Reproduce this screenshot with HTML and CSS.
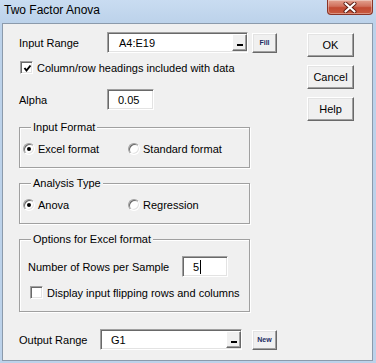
FILE: index.html
```html
<!DOCTYPE html>
<html>
<head>
<meta charset="utf-8">
<link rel="stylesheet" href="styles.css">
</head>
<body>
<div class="window">
  <div class="titlebar">
    <span class="title">Two Factor Anova</span>
    <div class="close">
      <svg width="14" height="11" viewBox="0 0 14 11">
        <path d="M2.5 1.5 L11.5 9.5 M11.5 1.5 L2.5 9.5" stroke="#5a1a10" stroke-width="4" stroke-linecap="round"/>
        <path d="M2.5 1.5 L11.5 9.5 M11.5 1.5 L2.5 9.5" stroke="#ffffff" stroke-width="2.2" stroke-linecap="round"/>
      </svg>
    </div>
  </div>
  <div class="client">
    <div class="main">
      <div class="row r-range">
        <span class="lbl w88">Input Range</span>
        <div class="tbox range"><span class="val">A4:E19</span><span class="pick"><i></i></span></div>
        <div class="btn mini">Fill</div>
      </div>
      <div class="check r-head"><span class="cb"><svg width="9" height="9" viewBox="0 0 9 9"><path d="M1.5 4 L3.5 6.5 L7.5 1.5" fill="none" stroke="#000" stroke-width="2"/></svg></span>Column/row headings included with data</div>
      <div class="row r-alpha">
        <span class="lbl w88">Alpha</span>
        <div class="tbox alpha"><span class="val">0.05</span></div>
      </div>
      <div class="group g1">
        <div class="legend">Input Format</div>
        <div class="opts">
          <span class="opt"><span class="radio on"><i></i></span>Excel format</span>
          <span class="opt"><span class="radio"></span>Standard format</span>
        </div>
      </div>
      <div class="group g2">
        <div class="legend">Analysis Type</div>
        <div class="opts">
          <span class="opt"><span class="radio on"><i></i></span>Anova</span>
          <span class="opt"><span class="radio"></span>Regression</span>
        </div>
      </div>
      <div class="group g3">
        <div class="legend">Options for Excel format</div>
        <div class="row r-rows">
          <span class="lbl w154">Number of Rows per Sample</span>
          <div class="tbox num"><span class="val">5<span class="caret"></span></span></div>
        </div>
        <div class="check r-flip"><span class="cb"></span>Display input flipping rows and columns</div>
      </div>
      <div class="row r-out">
        <span class="lbl w81">Output Range</span>
        <div class="tbox out"><span class="val">G1</span><span class="pick"><i></i></span></div>
        <div class="btn mini">New</div>
      </div>
    </div>
    <div class="side">
      <div class="btn big">OK</div>
      <div class="btn big">Cancel</div>
      <div class="btn big">Help</div>
    </div>
  </div>
</div>
</body>
</html>
```
FILE: styles.css
```css
html, body {
  margin: 0;
  padding: 0;
}
body {
  font: 11px "Liberation Sans", Arial, sans-serif;
  color: #000;
}
.window {
  width: 376px;
  height: 363px;
  background: linear-gradient(#c9dcf1, #bcd2ea 23px, #bcd2ea);
  display: flex;
  flex-direction: column;
  overflow: hidden;
}
.titlebar {
  height: 23px;
  flex: none;
  display: flex;
  justify-content: space-between;
  align-items: flex-start;
  padding: 0 3px 0 4px;
}
.title {
  font-size: 12px;
  line-height: 15px;
  padding-top: 3px;
  color: #000;
}
.close {
  width: 46px;
  height: 15px;
  box-sizing: border-box;
  border: 1px solid #8a3426;
  border-top: none;
  border-radius: 0 0 4px 4px;
  background: linear-gradient(#e3a291, #d0705c 45%, #c24a33 55%, #c85a3f);
  box-shadow: inset 0 0 0 1px rgba(255,255,255,0.35);
  display: flex;
  align-items: center;
  justify-content: center;
}
.client {
  flex: 1;
  margin: 0 3px 2px 2px;
  border: 1px solid #8b9aab;
  background: #f0f0f0;
  display: flex;
}
.main {
  width: 304px;
  flex: none;
  padding-left: 16px;
  box-sizing: border-box;
  display: flex;
  flex-direction: column;
  align-items: flex-start;
}
.row {
  display: flex;
  align-items: center;
  height: 21px;
}
.lbl { white-space: nowrap; }
.w88 { width: 88px; }
.w81 { width: 81px; }
.w154 { width: 154px; }
.r-range { margin-top: 8px; }
.r-head { margin-top: 8px; }
.r-alpha { margin-top: 15px; }
.g1 { margin-top: 17px; height: 41px; }
.g2 { margin-top: 15px; height: 41px; }
.g3 { margin-top: 15px; height: 73px; }
.r-out { margin-top: 17px; }

.tbox {
  height: 21px;
  box-sizing: border-box;
  background: #fff;
  border: 1px solid;
  border-color: #a0a0a0 #fff #fff #a0a0a0;
  box-shadow: inset 1px 1px 0 #696969, inset -1px -1px 0 #e3e3e3;
  display: flex;
  align-items: stretch;
}
.tbox .val {
  flex: 1;
  display: flex;
  align-items: center;
  padding-left: 10px;
}
.range { width: 141px; }
.out { width: 142px; }
.alpha { width: 47px; }
.num { width: 46px; }
.range .val { padding-left: 11px; }
.alpha .val { padding-left: 10px; }
.num .val { padding-left: 10px; }
.caret {
  display: inline-block;
  width: 1px;
  height: 14px;
  background: #000;
  margin-left: 1px;
}
.pick {
  width: 15px;
  margin: 1px 0 1px 0;
  box-sizing: border-box;
  background: #f0f0f0;
  border: 1px solid;
  border-color: #fff #696969 #696969 #fff;
  box-shadow: inset -1px -1px 0 #a0a0a0;
  display: flex;
  align-items: flex-end;
  justify-content: center;
  padding-bottom: 4px;
}
.pick i {
  display: block;
  width: 6px;
  height: 2px;
  background: #000;
}
.btn {
  box-sizing: border-box;
  background: #f0f0f0;
  border: 1px solid;
  border-color: #fff #696969 #696969 #fff;
  box-shadow: inset -1px -1px 0 #a0a0a0, inset 1px 1px 0 #e3e3e3;
  display: flex;
  align-items: center;
  justify-content: center;
}
.mini {
  width: 25px;
  height: 20px;
  font-size: 7px;
  font-weight: bold;
  color: #1c2c62;
}
.r-range .mini { margin-left: 4px; }
.r-out .mini { margin-left: 10px; }
.check {
  display: flex;
  align-items: center;
  height: 13px;
  white-space: nowrap;
}
.r-head { margin-left: 1px; }
.cb {
  width: 13px;
  height: 13px;
  box-sizing: border-box;
  background: #fff;
  border: 1px solid;
  border-color: #a0a0a0 #fff #fff #a0a0a0;
  box-shadow: inset 1px 1px 0 #696969, inset -1px -1px 0 #e3e3e3;
  margin-right: 4px;
  display: flex;
  align-items: center;
  justify-content: center;
  flex: none;
}
.cb svg { display: block; margin: 1px 0 0 1px; }
.group {
  width: 231px;
  box-sizing: border-box;
  border: 1px solid #a0a0a0;
  box-shadow: inset 1px 1px 0 #fff, 1px 1px 0 #fff;
  display: flex;
  flex-direction: column;
  align-items: flex-start;
}
.legend {
  margin: -7px 0 0 11px;
  padding: 0 2px;
  line-height: 13px;
  background: #f0f0f0;
  white-space: nowrap;
}
.opts {
  display: flex;
  height: 14px;
  margin-top: 8px;
  padding-left: 3px;
}
.opt {
  display: flex;
  align-items: center;
  width: 105px;
  white-space: nowrap;
}
.radio {
  width: 12px;
  height: 12px;
  box-sizing: border-box;
  border-radius: 50%;
  border: 1px solid;
  border-color: #a0a0a0 #fff #fff #a0a0a0;
  background: #fff;
  box-shadow: inset 1px 1px 0 #696969, inset -1px -1px 0 #e3e3e3;
  margin-right: 3px;
  display: flex;
  align-items: center;
  justify-content: center;
  flex: none;
}
.radio i {
  display: block;
  width: 4px;
  height: 4px;
  border-radius: 50%;
  background: #000;
}
.r-rows { margin-top: 10px; padding-left: 8px; height: 21px; }
.r-flip { margin-top: 9px; padding-left: 10px; }
.side {
  padding-top: 9px;
  display: flex;
  flex-direction: column;
  gap: 8px;
}
.big {
  width: 47px;
  height: 24px;
}
```
